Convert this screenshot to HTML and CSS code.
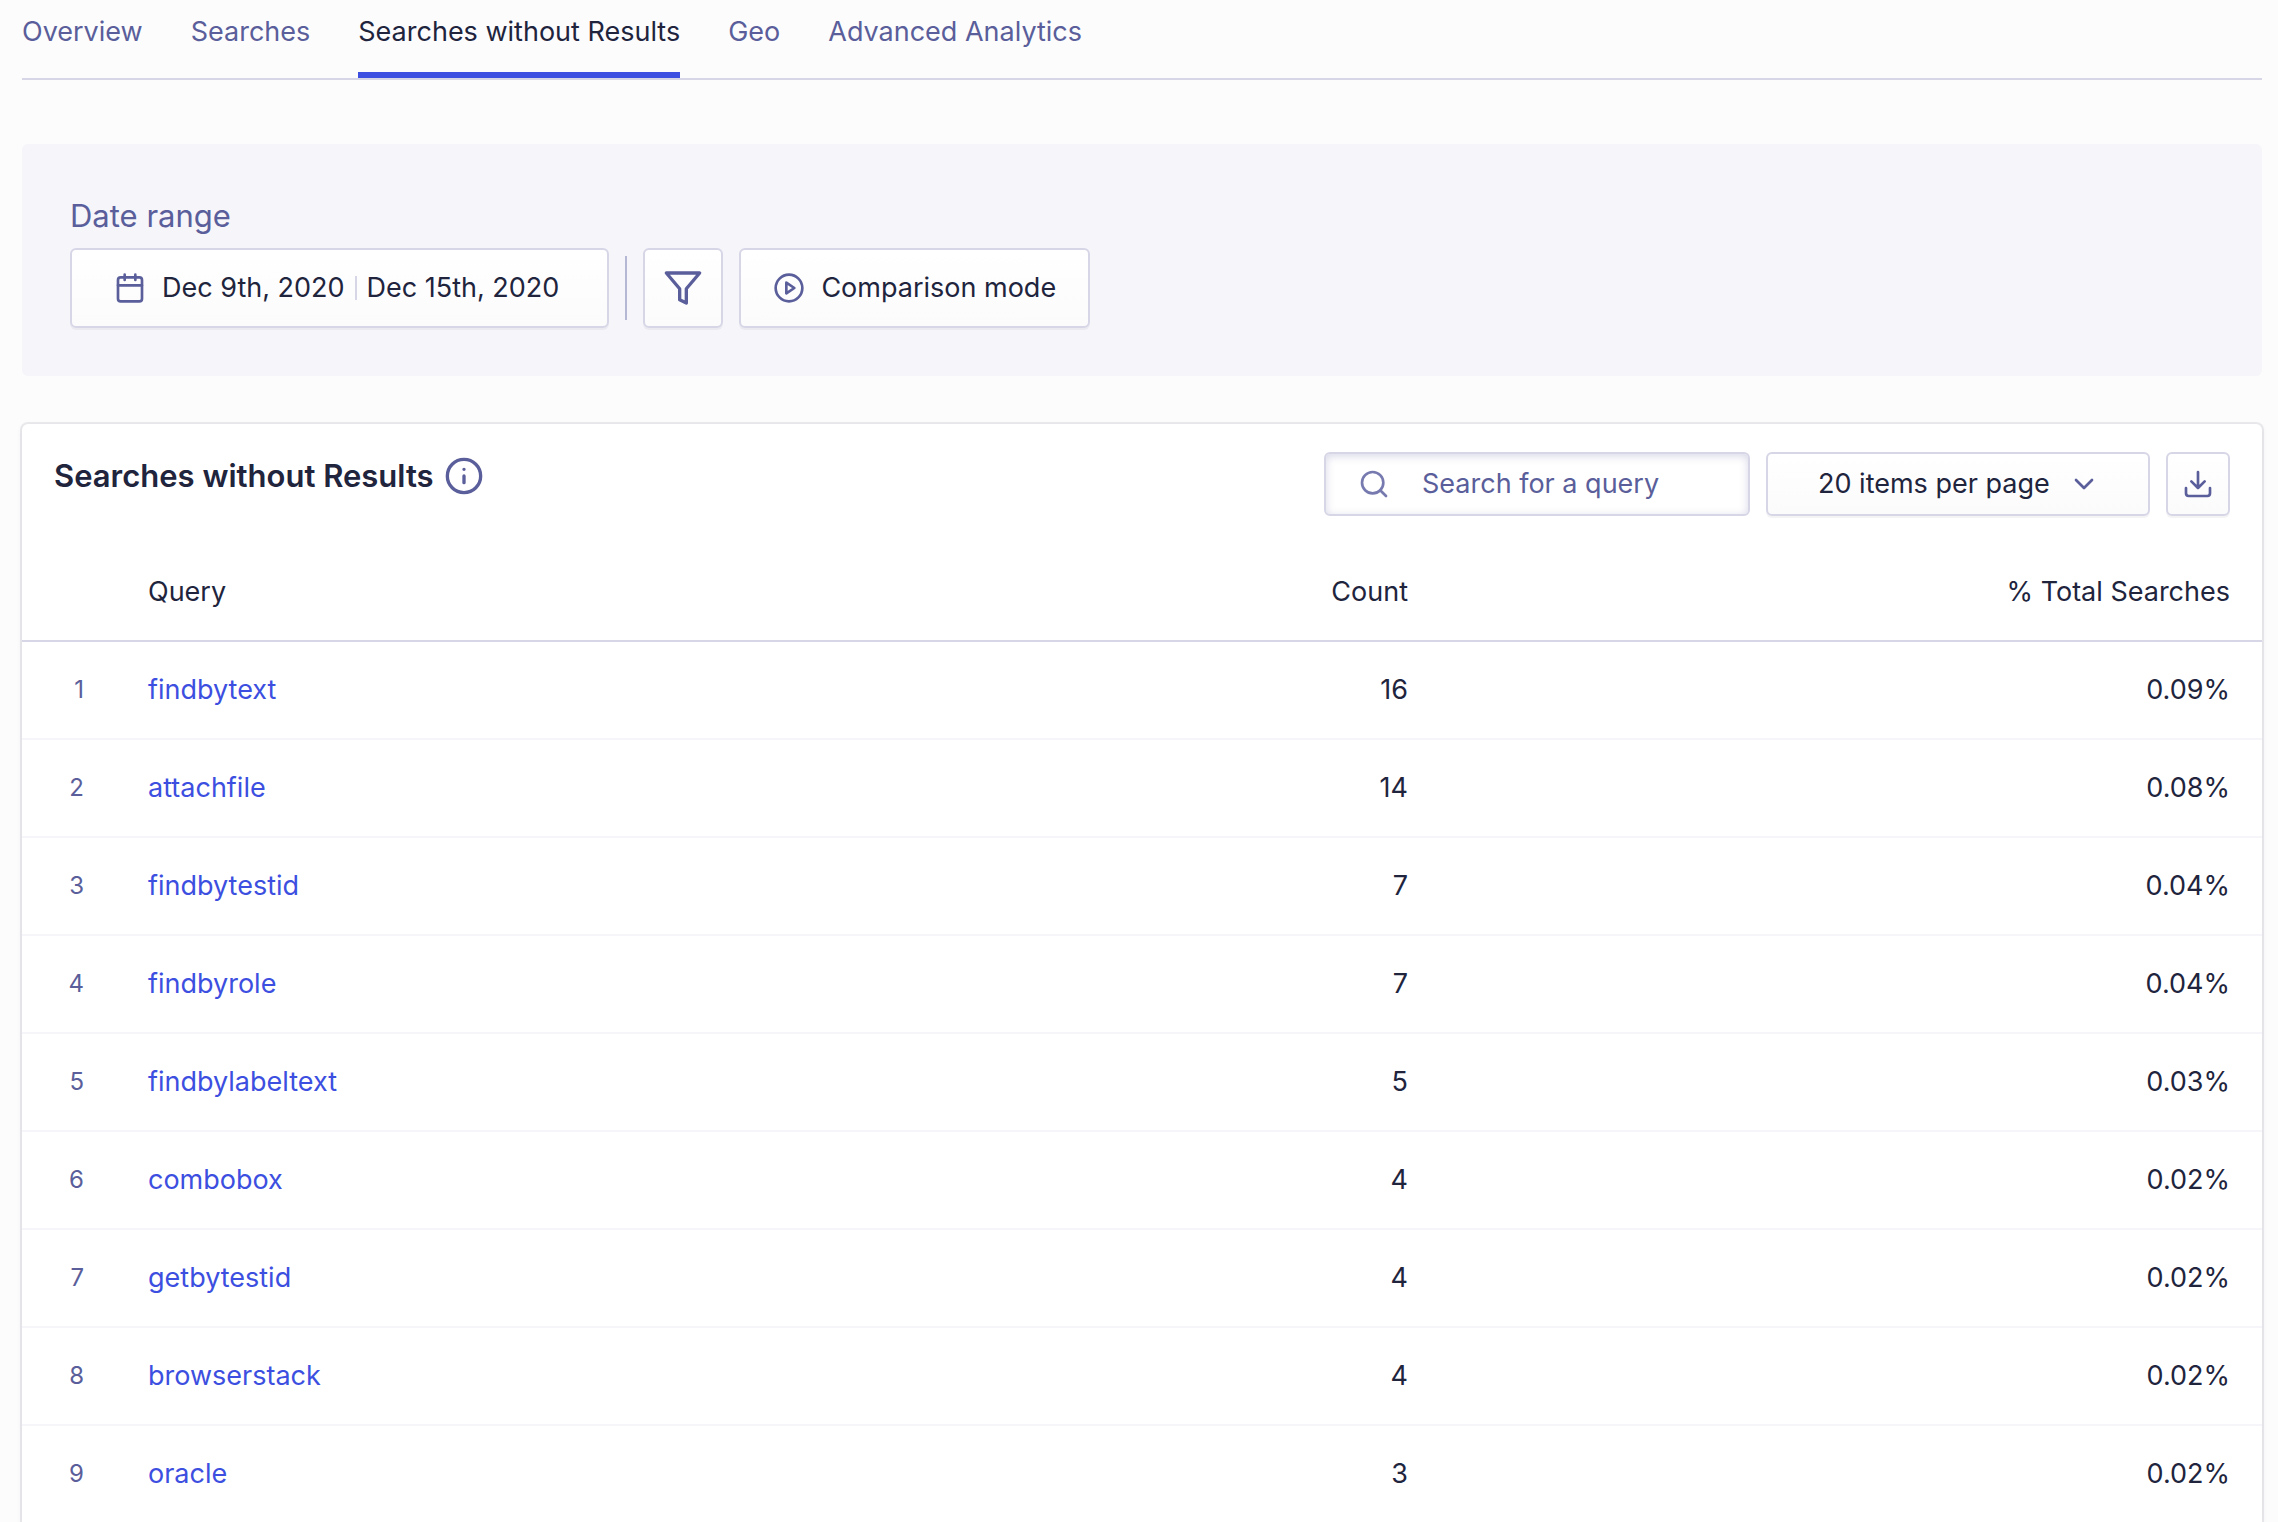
FILE: index.html
```
<!DOCTYPE html>
<html lang="en">
<head>
    <meta charset="UTF-8">
    <meta name="viewport" content="width=device-width, initial-scale=1.0">
    <title>Searches without Results</title>
    <link rel="stylesheet" href="styles.css">
</head>
<body>
    <nav class="tabs">
        <a class="tab" href="#">Overview</a>
        <a class="tab" href="#">Searches</a>
        <a class="tab active" href="#">Searches without Results</a>
        <a class="tab" href="#">Geo</a>
        <a class="tab" href="#">Advanced Analytics</a>
    </nav>

    <section class="filters">
        <div class="filters-label" id="date-label">Date range</div>
        <div class="filters-row">
            <button class="btn date-btn" aria-describedby="date-label">
                <svg class="icon" viewBox="0 0 24 24"><rect x="3" y="4" width="18" height="18" rx="2"/><path d="M16 2v4M8 2v4M3 10h18"/></svg>
                <span class="dates">
                    <span>Dec 9th, 2020</span>
                    <span class="date-divider"></span>
                    <span>Dec 15th, 2020</span>
                </span>
            </button>
            <div class="divider"></div>
            <button class="btn square-btn" aria-label="Filter">
                <svg class="icon icon-large" viewBox="0 0 24 24"><path d="M22 3H2l8 9.46V19l4 2v-8.54L22 3z"/></svg>
            </button>
            <button class="btn compare-btn">
                <svg class="icon" viewBox="0 0 24 24"><circle cx="12" cy="12" r="10"/><path d="M10 8l6 4-6 4V8z"/></svg>
                Comparison mode
            </button>
        </div>
    </section>

    <main class="card">
        <div class="card-header">
            <h1>
                Searches without Results
                <svg class="icon icon-large" viewBox="0 0 24 24"><circle cx="12" cy="12" r="10"/><path d="M12 16v-4M12 8h.01"/></svg>
            </h1>
            <div class="toolbar">
                <label class="search">
                    <svg class="icon" viewBox="0 0 24 24"><circle cx="11" cy="11" r="8"/><path d="M21 21l-4.35-4.35"/></svg>
                    <input type="text" placeholder="Search for a query" aria-label="Search for a query">
                </label>
                <div class="select">
                    <select aria-label="Items per page">
                        <option>20 items per page</option>
                        <option>50 items per page</option>
                        <option>100 items per page</option>
                    </select>
                    <svg class="icon" viewBox="0 0 24 24"><path d="M6 9l6 6 6-6"/></svg>
                </div>
                <button class="btn download-btn" aria-label="Download">
                    <svg class="icon" viewBox="0 0 24 24"><path d="M21 15v4a2 2 0 0 1-2 2H5a2 2 0 0 1-2-2v-4M7 10l5 5 5-5M12 15V3"/></svg>
                </button>
            </div>
        </div>

        <table>
            <thead>
                <tr>
                    <th class="rank"></th>
                    <th class="query">Query</th>
                    <th class="count">Count</th>
                    <th class="total">% Total Searches</th>
                </tr>
            </thead>
            <tbody>
                <tr>
                    <td class="rank">1</td>
                    <td class="query"><a href="#">findbytext</a></td>
                    <td class="count">16</td>
                    <td class="total">0.09%</td>
                </tr>
                <tr>
                    <td class="rank">2</td>
                    <td class="query"><a href="#">attachfile</a></td>
                    <td class="count">14</td>
                    <td class="total">0.08%</td>
                </tr>
                <tr>
                    <td class="rank">3</td>
                    <td class="query"><a href="#">findbytestid</a></td>
                    <td class="count">7</td>
                    <td class="total">0.04%</td>
                </tr>
                <tr>
                    <td class="rank">4</td>
                    <td class="query"><a href="#">findbyrole</a></td>
                    <td class="count">7</td>
                    <td class="total">0.04%</td>
                </tr>
                <tr>
                    <td class="rank">5</td>
                    <td class="query"><a href="#">findbylabeltext</a></td>
                    <td class="count">5</td>
                    <td class="total">0.03%</td>
                </tr>
                <tr>
                    <td class="rank">6</td>
                    <td class="query"><a href="#">combobox</a></td>
                    <td class="count">4</td>
                    <td class="total">0.02%</td>
                </tr>
                <tr>
                    <td class="rank">7</td>
                    <td class="query"><a href="#">getbytestid</a></td>
                    <td class="count">4</td>
                    <td class="total">0.02%</td>
                </tr>
                <tr>
                    <td class="rank">8</td>
                    <td class="query"><a href="#">browserstack</a></td>
                    <td class="count">4</td>
                    <td class="total">0.02%</td>
                </tr>
                <tr>
                    <td class="rank">9</td>
                    <td class="query"><a href="#">oracle</a></td>
                    <td class="count">3</td>
                    <td class="total">0.02%</td>
                </tr>
            </tbody>
        </table>
    </main>
</body>
</html>
```
FILE: styles.css
```
* {
    margin: 0;
    padding: 0;
    box-sizing: border-box;
}

body {
    background: #fcfcfd;
    color: #21243d;
    font-family: Inter, sans-serif;
    font-size: 27px;
    line-height: 40px;
    padding: 0 16px 0 22px;
}

button,
input,
select {
    font: inherit;
    color: inherit;
}

a {
    color: #3c4fe0;
    text-decoration: none;
}

.icon {
    width: 32px;
    height: 32px;
    flex: none;
    fill: none;
    stroke: #5a5e9a;
    stroke-width: 2;
    stroke-linecap: round;
    stroke-linejoin: round;
}

.icon-large {
    width: 40px;
    height: 40px;
}

/* Tabs */
.tabs {
    display: flex;
    gap: 48px;
    padding-top: 12px;
    border-bottom: 2px solid #d6d6e7;
    margin-bottom: 64px;
}

.tab {
    color: #5a5e9a;
    padding-bottom: 20px;
    border-bottom: 6px solid transparent;
}

.tab.active {
    color: #21243d;
    border-bottom-color: #3c4fe0;
}

/* Date range and filters */
.filters {
    background: #f5f5fa;
    border-radius: 6px;
    padding: 48px;
    margin-bottom: 48px;
}

.filters-label {
    color: #5a5e9a;
    font-size: 31px;
    line-height: 48px;
    margin-bottom: 8px;
}

.filters-row {
    display: flex;
    align-items: center;
    gap: 16px;
}

.btn {
    display: flex;
    align-items: center;
    justify-content: center;
    height: 80px;
    background: linear-gradient(#fff, #fbfbfc);
    border: 2px solid #d6d6e7;
    border-radius: 6px;
    box-shadow: 0 2px 0 rgba(35, 38, 59, 0.05);
    cursor: pointer;
}

.date-btn {
    gap: 16px;
    padding: 0 48px 0 42px;
}

.dates {
    display: flex;
    align-items: center;
    gap: 10px;
}

.date-divider {
    width: 2px;
    height: 24px;
    background: #d6d6e7;
}

.divider {
    width: 2px;
    height: 64px;
    background: #b5b7d5;
}

.square-btn {
    width: 80px;
}

.compare-btn {
    gap: 16px;
    padding: 0 32px;
}

/* Results card */
.card {
    background: #fff;
    border-radius: 6px 6px 0 0;
    box-shadow: 0 0 0 2px rgba(35, 38, 59, 0.08), 0 2px 6px rgba(35, 38, 59, 0.08);
}

.card-header {
    display: flex;
    justify-content: space-between;
    align-items: flex-start;
    padding: 28px 32px;
}

h1 {
    display: flex;
    align-items: center;
    gap: 10px;
    font-size: 31px;
    font-weight: 600;
    line-height: 48px;
}

.toolbar {
    display: flex;
    gap: 16px;
}

.search {
    display: flex;
    align-items: center;
    gap: 32px;
    width: 426px;
    height: 64px;
    padding: 0 32px;
    border: 2px solid #d6d6e7;
    border-radius: 6px;
    box-shadow: inset 0 2px 8px rgba(90, 94, 154, 0.25);
}

.search .icon {
    stroke: #777aaf;
}

.search input {
    flex: 1;
    min-width: 0;
    border: none;
    outline: none;
    background: none;
}

.search input::placeholder {
    color: #5a5e9a;
    opacity: 1;
}

.select {
    position: relative;
}

.select select {
    appearance: none;
    width: 384px;
    height: 64px;
    padding: 0 50px;
    background: linear-gradient(#fff, #fbfbfc);
    border: 2px solid #d6d6e7;
    border-radius: 6px;
    box-shadow: 0 2px 0 rgba(35, 38, 59, 0.05);
}

.select .icon {
    position: absolute;
    top: 16px;
    right: 50px;
    pointer-events: none;
}

.download-btn {
    width: 64px;
    height: 64px;
}

table {
    width: 100%;
    table-layout: fixed;
    border-collapse: separate;
    border-spacing: 0;
}

th,
td {
    padding: 28px 14px;
    font-weight: 400;
    text-align: left;
    border-bottom: 2px solid #f5f5fa;
}

th {
    border-bottom-color: #d6d6e7;
}

tbody tr:last-child td {
    border-bottom: none;
}

.rank {
    width: 5%;
    padding-right: 50px;
    color: #5a5e9a;
    font-size: 24px;
    text-align: right;
}

.query {
    width: 44%;
}

.count {
    width: 13.5%;
    text-align: right;
}

.total {
    padding-right: 32px;
    text-align: right;
}
```
